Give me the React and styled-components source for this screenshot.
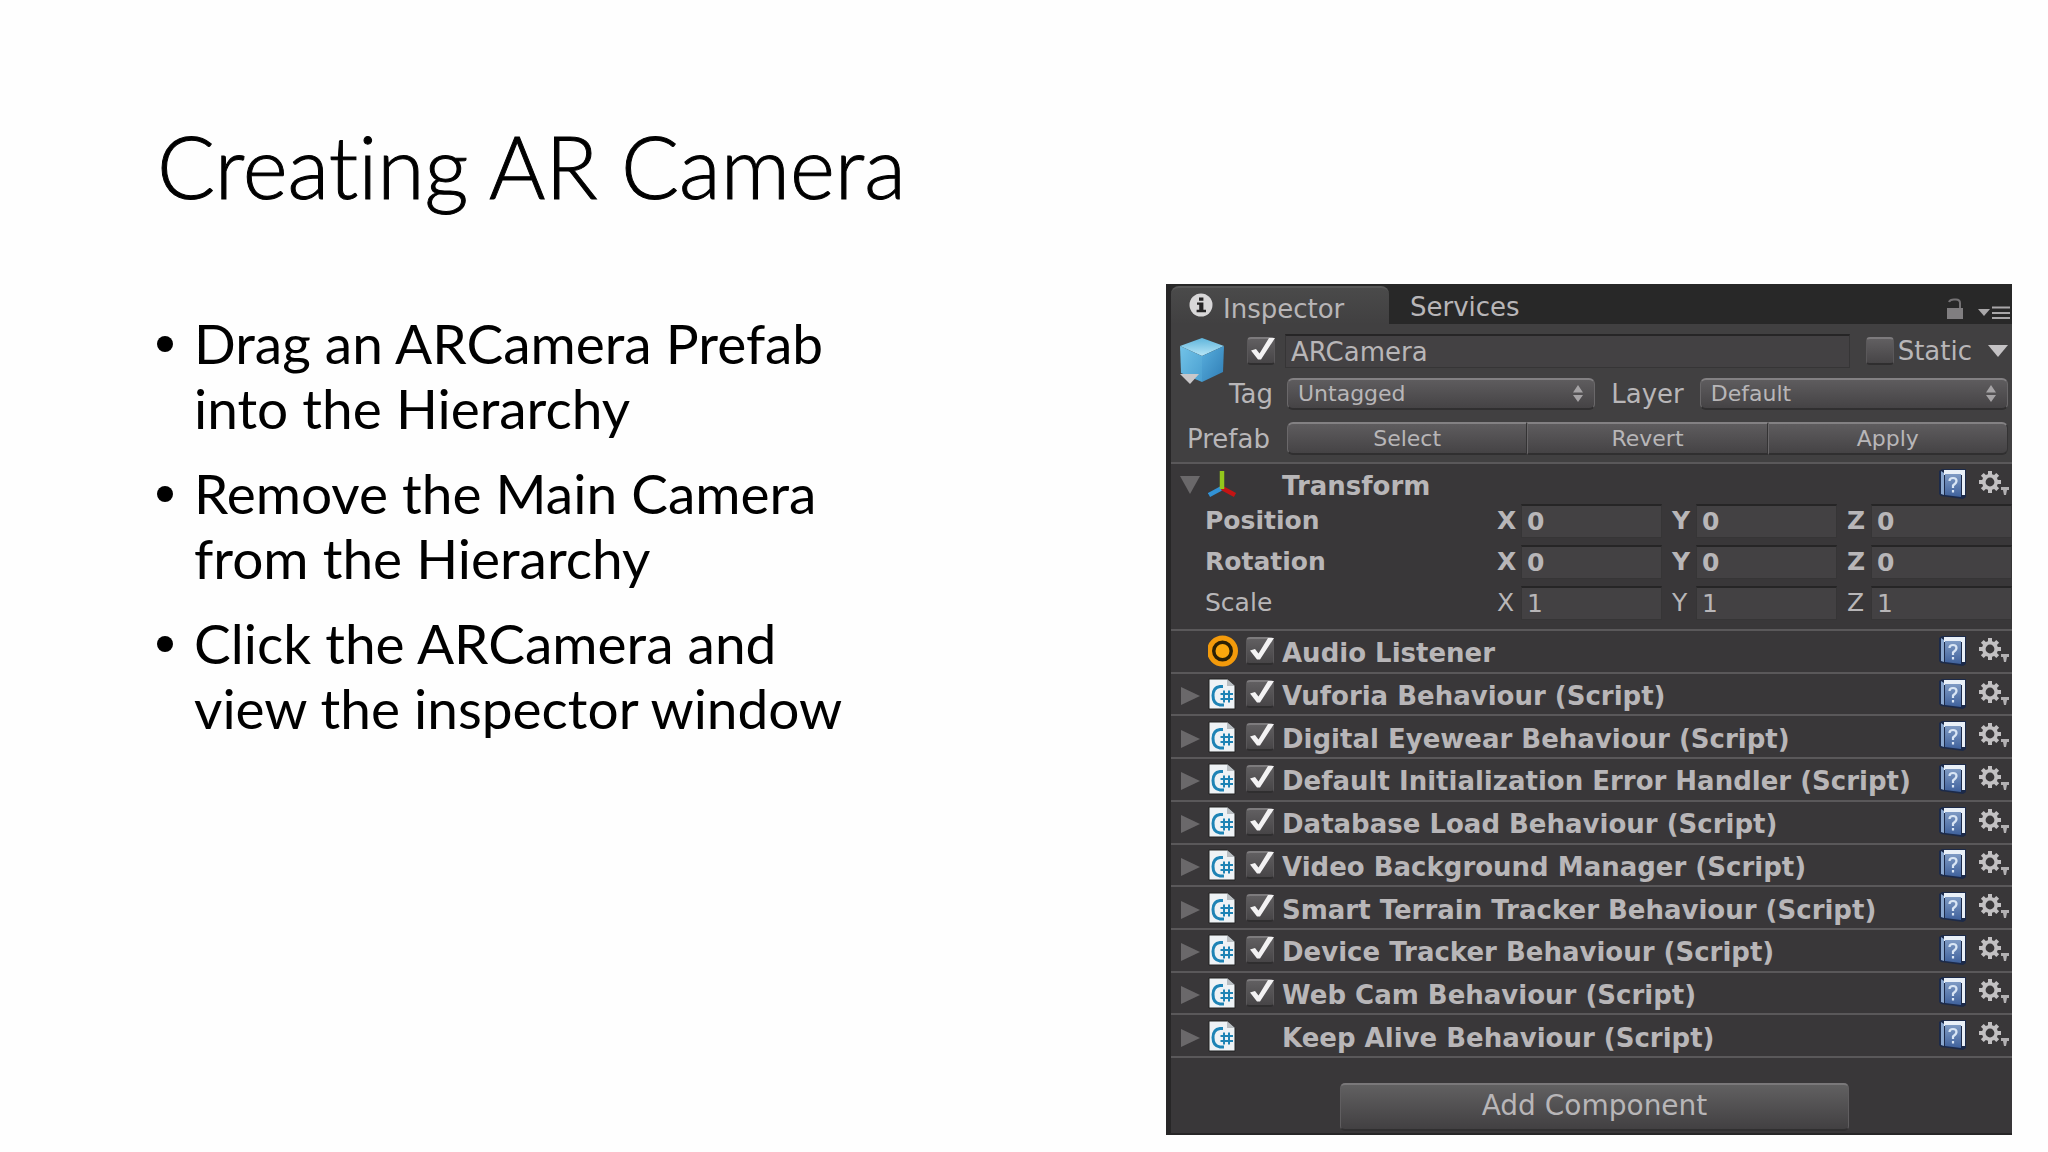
import React from 'react'
import styled, { createGlobalStyle } from "styled-components"

const GlobalStyle = createGlobalStyle`
*{
box-sizing:border-box;
}
body{
margin:0;
background:#fefefe;
color:#000;
font-family:Lato,"Liberation Sans",sans-serif;
font-variant-ligatures:none;
}
button,input,select{
font:inherit;
color:inherit;
margin:0;
}
`;

const Slide = styled.main`
min-height:100vh;
padding:118px 36px 17px 157px;
`;
const Title = styled.h1`
margin:0;
font-size:86px;
font-weight:300;
line-height:96px;
-webkit-text-stroke:1px #000;
`;
const Body = styled.div`
display:flex;
justify-content:space-between;
align-items:flex-start;
margin-top:70px;
`;
const Points = styled.ul`
display:flex;
flex-direction:column;
gap:20px;
width:38%;
margin:0;
padding:27px 0 0;
list-style:none;
font-size:55px;
line-height:65px;
`;
const Point = styled.li`
display:flex;
gap:21px;

&::before{
content:"";
flex:none;
width:16px;
height:16px;
margin-top:25px;
border-radius:50%;
background:#000;
}
`;

const Panel = styled.section`
width:46%;
max-width:846px;
border-left:5px solid #272627;
border-bottom:2px solid #272627;
background:#393739;
color:#b8b6b8;
font-family:"DejaVu Sans","Noto Sans",sans-serif;
font-size:26px;
line-height:32px;
`;
const TabBar = styled.div`
display:flex;
align-items:stretch;
height:40px;
padding-top:2px;
background:#282828;
`;
const Tab = styled.button`
display:flex;
align-items:flex-start;
gap:10px;
width:${({ $active }) => $active ? "218px" : "auto"};
padding:${({ $active }) => $active ? "5px 18px 0" : "3px 20px 0 21px"};
border:none;
border-top:2px solid ${({ $active }) => $active ? "#585858" : "transparent"};
border-radius:8px 8px 0 0;
background:${({ $active }) => $active ? "linear-gradient(#4a4a4a,#414041)" : "transparent"};
line-height:32px;
`;
const TabTools = styled.div`
display:flex;
align-items:flex-end;
gap:14px;
margin-left:auto;
padding:0 2px 4px 0;
`;

const Header = styled.header`
display:flex;
flex-direction:column;
gap:12px;
padding:10px 4px 7px 8px;
background:#414041;
border-bottom:2px solid #5a585a;
`;
const HeaderTop = styled.div`
display:grid;
grid-template-columns:46px 60px minmax(0,1fr);
row-gap:10px;
`;
const CubeCell = styled.div`
grid-row:1 / 3;
padding-top:3px;
`;
const ToggleCell = styled.div`
display:flex;
align-items:center;
padding-left:22px;
`;
const NameRow = styled.div`
display:flex;
align-items:center;
gap:16px;
`;
const TagLabel = styled.label`
align-self:center;
justify-self:end;
padding-right:12px;
`;
const Fields = styled.div`
display:flex;
align-items:center;
gap:16px;
padding-left:2px;
`;

const TextBox = styled.input`
flex:1;
min-width:0;
width:100%;
height:34px;
padding:0 5px;
border:1px solid #363536;
border-top:2px solid #262526;
border-radius:0;
background:#434143;
outline:none;
font-weight:${({ $bold }) => $bold ? 700 : 400};
`;

const CheckWrap = styled.span`
display:grid;
flex:none;
width:28px;
height:28px;

svg{
grid-area:1 / 1;
pointer-events:none;
}
`;
const CheckBox = styled.input`
grid-area:1 / 1;
appearance:none;
width:28px;
height:28px;
border:1px solid #5a585a;
border-top:2px solid #7d7b7d;
border-bottom:2px solid #2f2e2f;
border-radius:4px;
background:linear-gradient(#615f61,#474547);
`;
const StaticLabel = styled.label`
display:flex;
align-items:center;
gap:4px;
`;

const SelectWrap = styled.span`
display:grid;
flex:1;
align-items:center;

svg{
grid-area:1 / 1;
justify-self:end;
margin-right:11px;
pointer-events:none;
}
`;
const Select = styled.select`
grid-area:1 / 1;
appearance:none;
width:100%;
height:32px;
padding:0 10px;
border:1px solid #6a686a;
border-top:2px solid #838183;
border-bottom:2px solid #302f30;
border-radius:6px;
background:linear-gradient(#5e5c5e,#454345);
font-size:22px;
line-height:26px;
`;
const PrefabRow = styled.div`
display:grid;
grid-template-columns:100px minmax(0,1fr);
align-items:center;
padding-left:8px;
`;
const ButtonGroup = styled.div`
display:flex;
`;
const PrefabButton = styled.button`
flex:1;
height:33px;
padding:0;
border:1px solid #6a686a;
border-right-color:#343334;
border-top:2px solid #838183;
border-bottom:2px solid #302f30;
background:linear-gradient(#5e5c5e,#454345);
font-size:22px;
line-height:26px;

&:first-child{
border-radius:6px 0 0 6px;
}
&:last-child{
border-radius:0 6px 6px 0;
}
`;

const ComponentHead = styled.div`
display:grid;
grid-template-columns:20px 30px 28px minmax(0,1fr) auto;
column-gap:8px;
align-items:center;
height:100%;
padding:0 2px 0 9px;
`;
const ComponentTitle = styled.h2`
margin:0;
padding-top:4px;
font-size:26px;
font-weight:700;
line-height:32px;
white-space:nowrap;
`;
const HeadTools = styled.div`
display:flex;
align-items:center;
gap:11px;
padding-bottom:1px;
`;
const IconButton = styled.button`
display:flex;
padding:0;
border:none;
background:none;
`;

const Transform = styled.section`
padding-bottom:9px;
border-bottom:2px solid #5a585a;
`;
const TransformHead = styled.div`
height:40px;
`;
const VectorRow = styled.div`
display:grid;
grid-template-columns:282px repeat(3,minmax(0,1fr));
column-gap:10px;
align-items:center;
height:34px;
margin-bottom:7px;
padding-left:34px;
font-size:25px;
font-weight:${({ $bold }) => $bold ? 700 : 400};

&:last-child{
margin-bottom:0;
}
`;
const Axis = styled.label`
display:grid;
grid-template-columns:24px minmax(0,1fr);
align-items:center;
`;

const Components = styled.div`
display:grid;
grid-auto-rows:1fr;
height:427px;
`;
const ComponentRow = styled.section`
border-bottom:2px solid #5a585a;
`;
const Footer = styled.footer`
display:flex;
justify-content:center;
padding:25px 0 2px 6px;
`;
const AddButton = styled.button`
width:61%;
height:48px;
padding:0 6px 2px;
border:1px solid #605e60;
border-top:2px solid #7a787a;
border-bottom:2px solid #302f30;
border-radius:5px;
background:linear-gradient(#616061,#424042);
font-size:28px;
line-height:36px;
`;

const InfoIcon = () => (
  <svg width="24" height="24" viewBox="0 0 24 24">
    <circle cx="12" cy="12" r="11.5" fill="#d8d7d8" />
    <path d="M10 4.5h4.4v3.2H10zM8 9.5h6.4v7.3H17v2.4H7.6v-2.4h2.6v-5H8z" fill="#252425" />
  </svg>
)

const LockIcon = () => (
  <svg width="18" height="22" viewBox="0 0 18 22">
    <path d="M3 4Q4 1.5 8 1.5H10Q14 1.5 14 5V11" fill="none" stroke="#747274" strokeWidth="2" />
    <path d="M1 10h16v11H1z" fill="#807e80" />
  </svg>
)

const MenuIcon = () => (
  <svg width="32" height="14" viewBox="0 0 32 14">
    <path d="M0 3h12L6 10z" fill="#a9a7a9" />
    <path d="M14 1.5h18M14 7h18M14 12h18" stroke="#a9a7a9" strokeWidth="2" />
  </svg>
)

const CubeIcon = () => (
  <svg width="46" height="48" viewBox="0 0 46 48">
    <defs>
      <linearGradient id="cubeTop" x1="0" y1="0" x2="0" y2="1">
        <stop offset="0" stopColor="#5fb5dc" />
        <stop offset="1" stopColor="#b8e6f7" />
      </linearGradient>
      <linearGradient id="cubeLeft" x1="0" y1="0" x2="1" y2="1">
        <stop offset="0" stopColor="#72c3e8" />
        <stop offset="1" stopColor="#4a9fd0" />
      </linearGradient>
      <linearGradient id="cubeRight" x1="0" y1="0" x2="1" y2="1">
        <stop offset="0" stopColor="#58aedd" />
        <stop offset="1" stopColor="#2f7db5" />
      </linearGradient>
    </defs>
    <path d="M1 9L23 1L45 9L23 19z" fill="url(#cubeTop)" />
    <path d="M1 9L23 19V45L2 36z" fill="url(#cubeLeft)" />
    <path d="M45 9L23 19V45L44 35z" fill="url(#cubeRight)" />
    <path d="M1 37H20L11 47z" fill="#c9c7c9" />
  </svg>
)

const TickIcon = () => (
  <svg width="28" height="28" viewBox="0 0 28 28">
    <path d="M4 13.5L9 12L12.5 16.5L22 1H28L14 22.5H11z" fill="#f3f2f3" />
  </svg>
)

const ArrowsIcon = () => (
  <svg width="12" height="18" viewBox="0 0 12 18">
    <path d="M6 0L11 7.5H1zM6 17L11 10H1z" fill="#a5a3a5" />
  </svg>
)

const DownIcon = () => (
  <svg width="20" height="12" viewBox="0 0 20 12">
    <path d="M0 0H20L10 12z" fill="#c4c2c4" />
  </svg>
)

const FoldIcon = ({ open }) => (
  <svg width="20" height="24" viewBox="0 0 20 24">
    <path d={open ? "M0 4H20L10 22z" : "M1 5V23L20 14z"} fill="#6a686a" />
  </svg>
)

const AxesIcon = () => (
  <svg width="30" height="28" viewBox="0 0 30 28">
    <path d="M14 18L1 25" stroke="#3192d6" strokeWidth="4.5" />
    <path d="M14 18L27 25" stroke="#c41414" strokeWidth="4.5" />
    <path d="M14 1V19" stroke="#93c71c" strokeWidth="4.5" />
  </svg>
)

const ListenerIcon = () => (
  <svg width="32" height="32" viewBox="0 0 32 32">
    <circle cx="14.5" cy="16" r="13" fill="#2b2005" stroke="#f39a0b" strokeWidth="5" />
    <circle cx="14.5" cy="16" r="7" fill="#fba70d" />
  </svg>
)

const ScriptIcon = () => (
  <svg width="30" height="32" viewBox="0 0 30 32">
    <path d="M1 1H19L27 8V31H1z" fill="#eef2f5" stroke="#222" />
    <path d="M19 1V8H27z" fill="#b9bec2" />
    <path d="M15 8.5H12Q5 9.5 5 17.5Q5 26 12 27H16" fill="none" stroke="#1d83b5" strokeWidth="3" />
    <path d="M16 12.5V24.5M21 12.5V24.5M12.500 16H25M12.5 21H25" stroke="#1d83b5" strokeWidth="2" />
  </svg>
)

const HelpIcon = () => (
  <svg width="30" height="32" viewBox="0 0 30 32">
    <defs>
      <linearGradient id="book" x1="0" y1="0" x2="0" y2="1">
        <stop offset="0" stopColor="#7f9bc4" />
        <stop offset="1" stopColor="#3f619c" />
      </linearGradient>
    </defs>
    <path d="M1 3L4 1H28V29L25 31L3 28L1 26z" fill="#1c2a49" />
    <path d="M6 2H27V27H24V7H6z" fill="#e9f0f8" />
    <path d="M3 3L6 5V27L3 26z" fill="#8ba8cf" />
    <path d="M7 6H23V29L7 27z" fill="url(#book)" />
    <path d="M11.5 13Q11.5 10 15 10Q18.5 10 18.5 13Q18.5 15 15 17.5V20M15 22V24.5" fill="none" stroke="#d9e6f5" strokeWidth="2.2" />
  </svg>
)

const GearIcon = () => (
  <svg width="31" height="26" viewBox="0 0 31 26">
    <g stroke="#c2c0c2" strokeWidth="4">
      <path d="M11 0V5M11 17V22M0 11H5M17 11H22M3.3 3.3L7 7M15 15L18.7 18.7M18.7 3.3L15 7M7 15L3.3 18.7" />
      <circle cx="11" cy="11" r="6.2" fill="none" strokeWidth="3.6" />
    </g>
    <path d="M22 16H30V19H28L27 24H25L24 19H22z" fill="#b2b0b2" />
  </svg>
)

const Check = ({ id, label, checked }) => (
  <CheckWrap>
    <CheckBox type="checkbox" id={id} aria-label={label} defaultChecked={checked} />
    {checked && <TickIcon />}
  </CheckWrap>
)

const Head = ({ name, fold, icon, check }) => (
  <ComponentHead>
    {fold ? <FoldIcon open={fold === "open"} /> : <span />}
    {icon}
    {check ? <Check label={name} checked /> : <span />}
    <ComponentTitle>{name}</ComponentTitle>
    <HeadTools>
      <IconButton aria-label="Help"><HelpIcon /></IconButton>
      <IconButton aria-label="Settings"><GearIcon /></IconButton>
    </HeadTools>
  </ComponentHead>
)

const vectors = [
  { name: "Position", value: "0", bold: true },
  { name: "Rotation", value: "0", bold: true },
  { name: "Scale", value: "1", bold: false },
]

const components = [
  { name: "Audio Listener", listener: true, check: true },
  { name: "Vuforia Behaviour (Script)", check: true },
  { name: "Digital Eyewear Behaviour (Script)", check: true },
  { name: "Default Initialization Error Handler (Script)", check: true },
  { name: "Database Load Behaviour (Script)", check: true },
  { name: "Video Background Manager (Script)", check: true },
  { name: "Smart Terrain Tracker Behaviour (Script)", check: true },
  { name: "Device Tracker Behaviour (Script)", check: true },
  { name: "Web Cam Behaviour (Script)", check: true },
  { name: "Keep Alive Behaviour (Script)", check: false },
]

const Inspector = () => {
  return (
    <Panel>
      <TabBar>
        <Tab $active><InfoIcon />Inspector</Tab>
        <Tab>Services</Tab>
        <TabTools>
          <IconButton aria-label="Lock"><LockIcon /></IconButton>
          <IconButton aria-label="Menu"><MenuIcon /></IconButton>
        </TabTools>
      </TabBar>
      <Header>
        <HeaderTop>
          <CubeCell><CubeIcon /></CubeCell>
          <ToggleCell><Check label="Active" checked /></ToggleCell>
          <NameRow>
            <TextBox aria-label="Name" defaultValue="ARCamera" />
            <StaticLabel htmlFor="static"><Check id="static" label="Static" />Static</StaticLabel>
            <IconButton aria-label="Static options"><DownIcon /></IconButton>
          </NameRow>
          <TagLabel htmlFor="tag">Tag</TagLabel>
          <Fields>
            <SelectWrap>
              <Select id="tag"><option>Untagged</option></Select>
              <ArrowsIcon />
            </SelectWrap>
            <label htmlFor="layer">Layer</label>
            <SelectWrap>
              <Select id="layer"><option>Default</option></Select>
              <ArrowsIcon />
            </SelectWrap>
          </Fields>
        </HeaderTop>
        <PrefabRow>
          <span>Prefab</span>
          <ButtonGroup>
            <PrefabButton>Select</PrefabButton>
            <PrefabButton>Revert</PrefabButton>
            <PrefabButton>Apply</PrefabButton>
          </ButtonGroup>
        </PrefabRow>
      </Header>
      <Transform>
        <TransformHead>
          <Head name="Transform" fold="open" icon={<AxesIcon />} />
        </TransformHead>
        {vectors.map(({ name, value, bold }) => (
          <VectorRow key={name} $bold={bold}>
            <span>{name}</span>
            {["X", "Y", "Z"].map((axis) => (
              <Axis key={axis}>
                {axis}
                <TextBox $bold={bold} defaultValue={value} />
              </Axis>
            ))}
          </VectorRow>
        ))}
      </Transform>
      <Components>
        {components.map(({ name, listener, check }) => (
          <ComponentRow key={name}>
            <Head
              name={name}
              fold={listener ? null : "closed"}
              icon={listener ? <ListenerIcon /> : <ScriptIcon />}
              check={check}
            />
          </ComponentRow>
        ))}
      </Components>
      <Footer>
        <AddButton>Add Component</AddButton>
      </Footer>
    </Panel>
  )
}

const App = () => {
  return (
    <Slide>
      <GlobalStyle />
      <Title>Creating AR Camera</Title>
      <Body>
        <Points>
          <Point>Drag an ARCamera Prefab into the Hierarchy</Point>
          <Point>Remove the Main Camera from the Hierarchy</Point>
          <Point>Click the ARCamera and view the inspector window</Point>
        </Points>
        <Inspector />
      </Body>
    </Slide>
  )
}

export default App
